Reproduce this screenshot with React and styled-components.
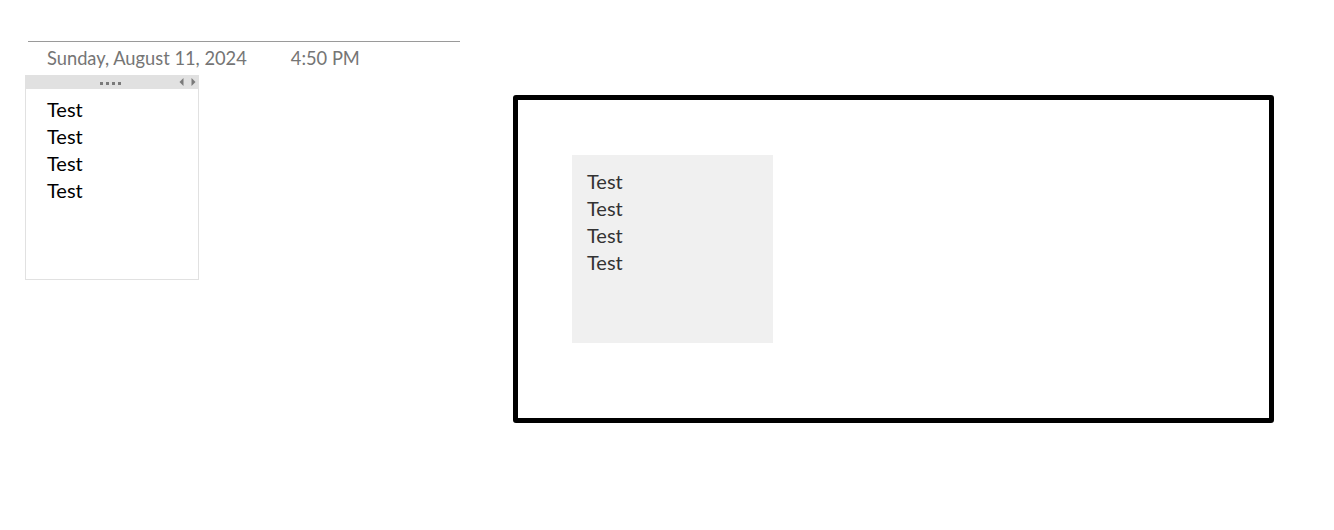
import React from 'react'
import styled, { createGlobalStyle } from 'styled-components'

const GlobalStyle = createGlobalStyle`
  html, body {
    margin: 0;
    padding: 0;
    background: #fff;
  }
  body {
    font-family: Lato, "Open Sans", sans-serif;
  }
`

const lines = ['Test', 'Test', 'Test', 'Test']

function App() {
  return (
    <Page>
      <GlobalStyle />
      <LeftColumn>
        <PageHeader>
          <DateText>Sunday, August 11, 2024</DateText>
          <DateText>4:50 PM</DateText>
        </PageHeader>
        <NoteBox>
          <NoteHandle>
            <Grip>
              {[0, 1, 2, 3].map(i => <GripDot key={i} />)}
            </Grip>
            <Arrows>
              <svg width="17" height="8" viewBox="0 0 17 8">
                <path d="M4.5 0 L0.5 4 L4.5 8 Z" fill="#7a7a7a" />
                <path d="M12.5 0 L16.5 4 L12.5 8 Z" fill="#7a7a7a" />
              </svg>
            </Arrows>
          </NoteHandle>
          <NoteBody>
            {lines.map((l, i) => <Line key={i}>{l}</Line>)}
          </NoteBody>
        </NoteBox>
      </LeftColumn>
      <Frame>
        <Card>
          {lines.map((l, i) => <Line key={i} $muted>{l}</Line>)}
        </Card>
      </Frame>
    </Page>
  )
}

const Page = styled.div`
  display: flex;
  align-items: flex-start;
  width: 1334px;
  height: 530px;
  overflow: hidden;
`

const LeftColumn = styled.div`
  display: flex;
  flex-direction: column;
  flex-shrink: 0;
  padding: 41px 0 0 25px;
  width: 435px;
`

const PageHeader = styled.div`
  margin-left: 3px;
  width: 432px;
  border-top: 1px solid #9a9a9a;
  display: flex;
  gap: 44px;
  padding: 5px 0 0 19px;
  height: 28px;
  box-sizing: border-box;
`

const DateText = styled.span`
  font-size: 18.3px;
  color: #757575;
  line-height: 22px;
`

const NoteBox = styled.div`
  margin-top: 6px;
  width: 174px;
  height: 205px;
  border: 1px solid #e1e1e1;
  box-sizing: border-box;
  display: flex;
  flex-direction: column;
`

const NoteHandle = styled.div`
  height: 14px;
  background: #e1e1e1;
  display: flex;
  align-items: center;
  justify-content: flex-end;
  position: relative;
  margin: -1px -1px 0;
`

const Grip = styled.div`
  position: absolute;
  left: 75px;
  top: 7px;
  display: flex;
  gap: 3px;
`

const GripDot = styled.span`
  width: 3px;
  height: 3px;
  background: #7a7a7a;
`

const Arrows = styled.div`
  display: flex;
  align-items: center;
  padding-right: 3px;
`

const NoteBody = styled.div`
  padding: 7px 0 0 21px;
`

const Line = styled.div`
  font-size: 20px;
  line-height: 27px;
  color: ${p => (p.$muted ? '#333' : '#000')};
`

const Frame = styled.div`
  flex-shrink: 0;
  margin: 95px 0 0 53px;
  width: 761px;
  height: 328px;
  box-sizing: border-box;
  border: 5px solid #000;
  border-radius: 3px;
  padding: 55px 0 0 54px;
`

const Card = styled.div`
  width: 201px;
  height: 188px;
  background: #f0f0f0;
  box-sizing: border-box;
  padding: 13px 0 0 15px;
`

export default App
